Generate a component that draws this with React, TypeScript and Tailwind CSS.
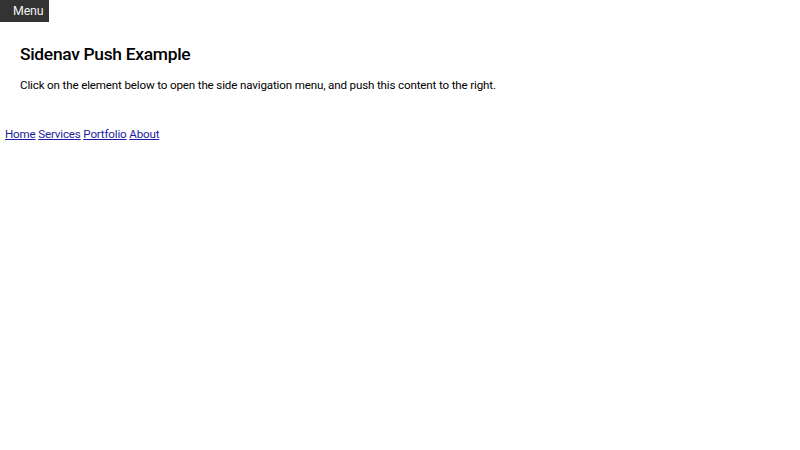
export default function App() {
  return (
    <div className="w-[800px] h-[450px] bg-white font-['Roboto',sans-serif] text-black">
      <div className="flex">
        <span className="bg-[#333333] text-[#f1f1f1] text-[12.4px] tracking-[-0.15px] leading-[22px] h-[22px] pl-[13px] pr-[6px]">Menu</span>
      </div>
      <div className="px-[20px] pt-[21px]">
        <h2 className="text-[17.4px] tracking-[-0.3px] leading-[22px] font-medium">Sidenav Push Example</h2>
        <p className="text-[11.6px] tracking-[-0.15px] leading-[16px] mt-[12px]">Click on the element below to open the side navigation menu, and push this content to the right.</p>
      </div>
      <div className="px-[5px] mt-[33px] text-[11.6px] tracking-[-0.17px] leading-[16px]">
        <a href="#" className="underline text-[#1c1c9c]">Home</a>{" "}
        <a href="#" className="underline text-[#1c1c9c]">Services</a>{" "}
        <a href="#" className="underline text-[#1c1c9c]">Portfolio</a>{" "}
        <a href="#" className="underline text-[#1c1c9c]">About</a>
      </div>
    </div>
  );
}
